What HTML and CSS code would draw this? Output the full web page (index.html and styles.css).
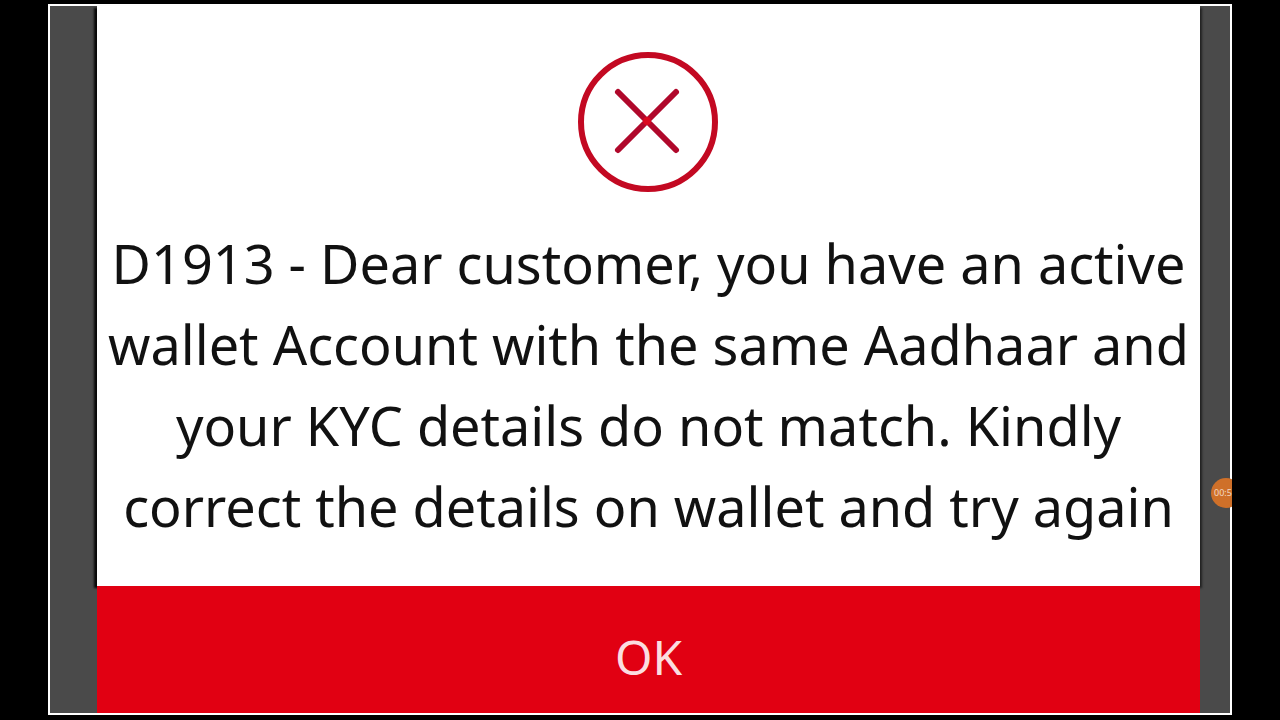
FILE: index.html
```html
<!DOCTYPE html>
<html lang="en">
<head>
<meta charset="utf-8">
<meta name="viewport" content="width=device-width, initial-scale=1">
<title>Wallet account error</title>
<link rel="stylesheet" href="styles.css">
</head>
<body>
<div class="frame">
  <main class="backdrop">
    <section class="dialog" role="alertdialog" aria-describedby="message">
      <div class="content">
        <svg class="error-icon" viewBox="0 0 142 142" fill="none" aria-hidden="true">
          <circle cx="70" cy="71" r="67" stroke="#c30922" stroke-width="6"/>
          <path d="M40 41 98 99M98 41 40 99" stroke="#b0082b" stroke-width="6" stroke-linecap="round"/>
          <circle cx="69" cy="70" r="4" fill="#dc0820"/>
        </svg>
        <p class="message" id="message">D1913 - Dear customer, you have an active<br>wallet Account with the same Aadhaar and<br>your KYC details do not match. Kindly<br>correct the details on wallet and try again</p>
      </div>
      <button class="ok" type="button">OK</button>
    </section>
  </main>
  <div class="timer">00:5</div>
</div>
</body>
</html>
```
FILE: styles.css
```css
* {
  box-sizing: border-box;
}

body {
  margin: 0;
  min-height: 100vh;
  padding: 4px 48px 5px;
  display: flex;
  background: #000;
  font-family: "Noto Sans", sans-serif;
}

.frame {
  position: relative;
  flex: 1;
  display: flex;
  padding: 2px;
  overflow: hidden;
  background: #fff;
}

.backdrop {
  flex: 1;
  display: flex;
  padding: 0 30px 0 47px;
  background: #4a4a4a;
}

.dialog {
  flex: 1;
  display: flex;
  flex-direction: column;
  background: #fff;
}

.content {
  flex: 1;
  display: flex;
  flex-direction: column;
  align-items: center;
  padding: 45px 0 39px;
  box-shadow: -3px 2px 2px #080808, 2px 2px 2px #222;
}

.error-icon {
  width: 142px;
  height: 142px;
  margin-bottom: 30px;
}

.message {
  margin: 0;
  color: #111;
  font-size: 54px;
  line-height: 81px;
  text-align: center;
  white-space: nowrap;
}

.ok {
  height: 127px;
  padding: 14px 0 0;
  border: 0;
  background: #e10012;
  color: #fbdde0;
  font-family: "Noto Sans", sans-serif;
  font-size: 48px;
  text-align: center;
}

.timer {
  position: absolute;
  top: 474px;
  right: -9px;
  width: 30px;
  height: 30px;
  padding-left: 3px;
  border-radius: 50%;
  background: #cf7029;
  color: #f3d9c2;
  font-size: 9px;
  line-height: 30px;
}
```
